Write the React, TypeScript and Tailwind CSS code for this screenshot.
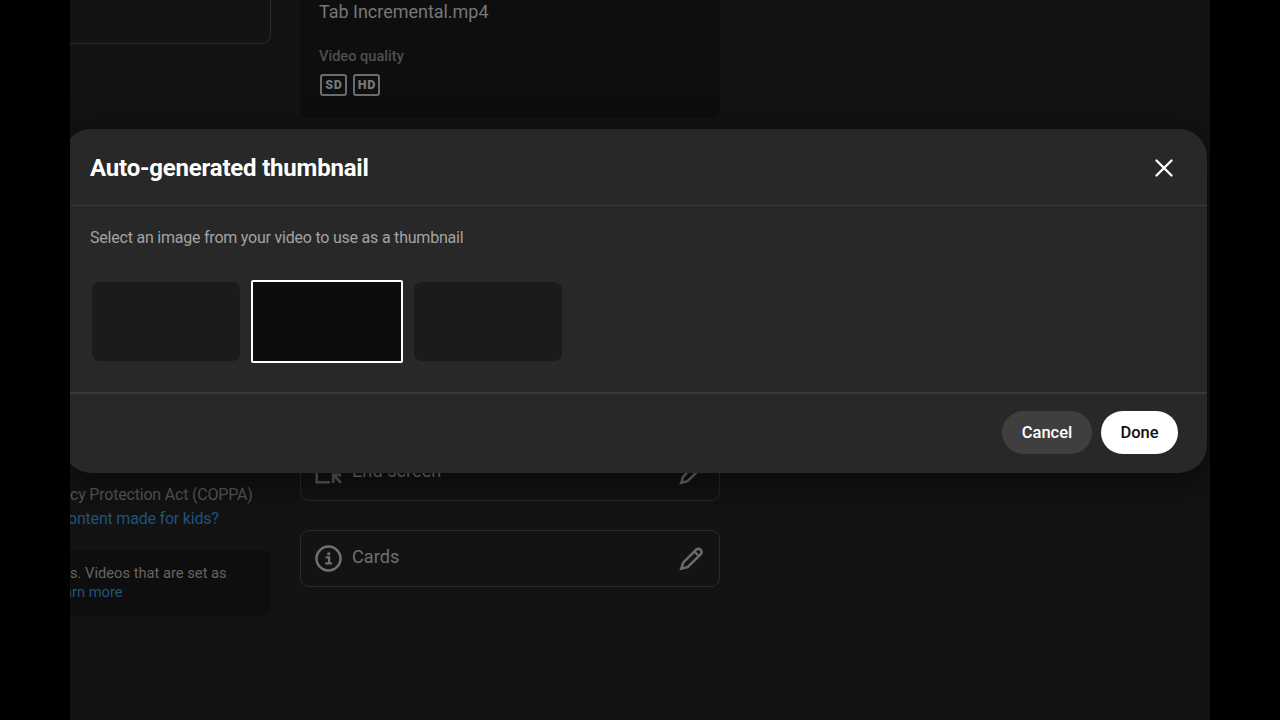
import { useState } from "react";
import clsx from "clsx";

function QualityBadge({ label }: { label: string }) {
  return (
    <span className="flex h-[22px] w-[27px] items-center justify-center rounded-[3px] border-[2.5px] border-[#6c6c6c] pl-px text-[12.5px] leading-none font-black tracking-[0.8px] text-[#777777]">
      {label}
    </span>
  );
}

function PencilIcon() {
  return (
    <svg width="26" height="26" viewBox="0 0 26 26" fill="none" stroke="#6b6b6b" strokeWidth="2.5" strokeLinejoin="miter">
      <path d="M3.2 22.8 L5.2 16.6 L18 3.8 Q20.2 1.9 22.6 3.8 Q24.5 6.2 22.6 8.4 L9.6 21.2 Z" />
      <path d="M16.2 5.4 L20.8 10" strokeWidth="2.2" />
    </svg>
  );
}

function InfoIcon() {
  return (
    <svg width="28" height="28" viewBox="0 0 28 28" fill="none" stroke="#707070" strokeWidth="2.5">
      <circle cx="14.5" cy="13.5" r="12" />
      <path d="M11.7 12.4H15.1V18M11.3 18.4H18.1" strokeWidth="2.2" />
      <rect x="13.3" y="7.4" width="2.9" height="2.8" fill="#707070" stroke="none" />
    </svg>
  );
}

function EndScreenIcon() {
  return (
    <svg width="28" height="28" viewBox="0 0 28 28" fill="none" stroke="#5c5c5c" strokeWidth="2.5">
      <path d="M16 23.3H2.7V4H26.5V12" />
      <path d="M19.2 24V15.8H27M20 16.6L27 23.8" strokeWidth="2.8" />
    </svg>
  );
}

interface SettingRowProps {
  label: string;
  icon: React.ReactNode;
}

function SettingRow({ label, icon }: SettingRowProps) {
  return (
    <div className="flex h-[57px] items-center rounded-[9px] border border-[#2b2b2b] pr-[15px] pl-[13px]">
      {icon}
      <span className="ml-[10px] flex-1 pb-[3px] text-[18.2px] leading-6 text-[#707070]">{label}</span>
      <PencilIcon />
    </div>
  );
}

// Video details page that sits behind the dialog
function DetailsPage() {
  return (
    <div className="flex h-full">
      <div className="flex w-[201px] flex-col">
        <div className="h-[44px] rounded-br-[9px] border-r border-b border-[#2c2c2c]" />
        <div className="mt-[439px] text-[16px] leading-6 tracking-[-0.2px] whitespace-nowrap text-[#595959]">
          <p>cy Protection Act (COPPA)</p>
          <p className="-ml-0.5 text-[#20547d]">ontent made for kids?</p>
        </div>
        <div className="mt-[19px] h-[66px] rounded-r-lg bg-[#0e0e0e] pt-[14px] text-[14.7px] leading-[19px] whitespace-nowrap text-[#656565]">
          <p>s. Videos that are set as</p>
          <p className="-ml-[6px] text-[#20547d]">arn more</p>
        </div>
      </div>

      <div className="ml-[29px] flex w-[420px] flex-col">
        <div className="h-[118px] rounded-b-lg bg-[#0e0e0e] pl-[19px]">
          <p className="text-[18px] leading-[23px] tracking-[-0.02px] text-[#777777]">Tab Incremental.mp4</p>
          <p className="mt-[23px] text-[14.6px] leading-[20px] font-medium text-[#4f4f4f]">Video quality</p>
          <div className="mt-[8px] flex gap-[6px] pl-px">
            <QualityBadge label="SD" />
            <QualityBadge label="HD" />
          </div>
        </div>
        <div className="mt-[326px] flex flex-col gap-[29px]">
          <SettingRow label="End screen" icon={<EndScreenIcon />} />
          <SettingRow label="Cards" icon={<InfoIcon />} />
        </div>
      </div>
    </div>
  );
}

function ThumbnailDialog() {
  const [selected, setSelected] = useState(1);

  return (
    <div className="absolute top-[129px] -left-[7px] flex h-[344px] w-[1144px] flex-col rounded-[28px] bg-[#282828] shadow-[0_8px_32px_8px_rgba(0,0,0,0.4)]">
      <header className="flex h-[77px] items-center justify-between border-b border-[#3a3a3a] pt-[2px] pr-[34px] pl-[27px]">
        <h2 className="text-[24px] leading-8 font-bold tracking-[-0.2px] text-white">Auto-generated thumbnail</h2>
        <button type="button" aria-label="Close">
          <svg width="18" height="18" viewBox="0 0 18 18" stroke="#ffffff" strokeWidth="2.4" strokeLinecap="round">
            <path d="M1.5 1.5L16.5 16.5M16.5 1.5L1.5 16.5" />
          </svg>
        </button>
      </header>

      <div className="flex-1 pt-[20px] pl-[27px]">
        <p className="text-[16px] leading-6 tracking-[-0.22px] text-[#a3a3a3]">Select an image from your video to use as a thumbnail</p>
        <div className="mt-[30px] flex gap-[9px]">
          {[0, 1, 2].map((index) => (
            <button
              key={index}
              type="button"
              aria-label={`Thumbnail ${index + 1}`}
              onClick={() => setSelected(index)}
              className={clsx(
                "h-[83px] w-[152px] border-2",
                selected === index
                  ? "rounded-[2px] border-white bg-[#0d0d0d]"
                  : "rounded-[10px] border-transparent bg-[#1b1b1b] bg-clip-padding"
              )}
            />
          ))}
        </div>
      </div>

      <footer className="flex h-[81px] items-center justify-end gap-[9px] border-t-2 border-[#3a3a3a] pr-[29px] pb-[2px]">
        <button type="button" className="h-[43px] w-[90px] rounded-full bg-[#3f3f3f] pt-px text-[16.5px] font-medium text-white">
          Cancel
        </button>
        <button type="button" className="h-[43px] w-[77px] rounded-full bg-white pt-px text-[16.5px] font-medium text-[#0f0f0f]">
          Done
        </button>
      </footer>
    </div>
  );
}

export default function App() {
  return (
    <div className="flex h-[720px] w-[1280px] justify-center overflow-hidden bg-black font-['Roboto',sans-serif]">
      <main className="relative w-[1140px] overflow-hidden bg-[#131313]">
        <DetailsPage />
        <ThumbnailDialog />
      </main>
    </div>
  );
}
